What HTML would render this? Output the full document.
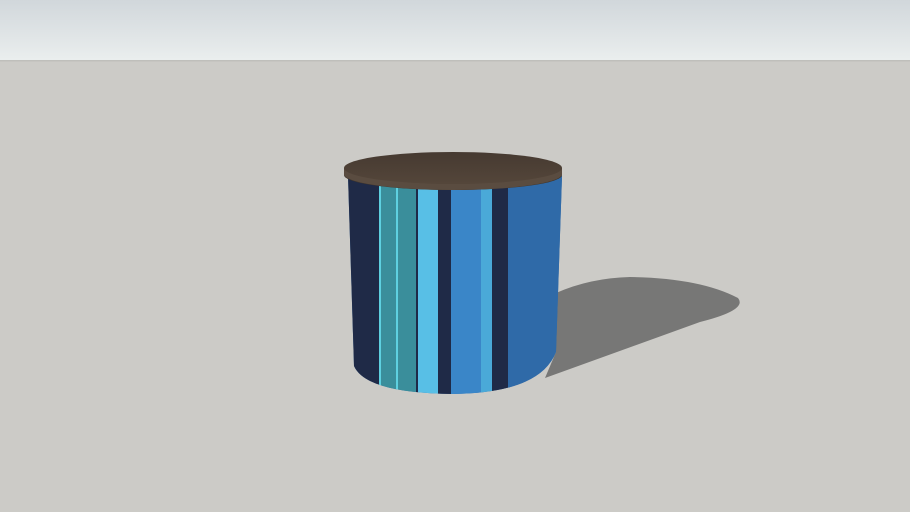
<!DOCTYPE html>
<html><head><style>html,body{margin:0;padding:0;width:910px;height:512px;overflow:hidden}</style></head>
<body>
<svg width="910" height="512" viewBox="0 0 910 512" xmlns="http://www.w3.org/2000/svg">
<defs>
<linearGradient id="sky" x1="0" y1="0" x2="0" y2="1"><stop offset="0" stop-color="#d1d7db"/><stop offset="1" stop-color="#eaeeee"/></linearGradient>
<clipPath id="body"><path d="M348 176 L562 176 L556 352 Q540 393 453 394 Q366 393 354 366 Z"/></clipPath>
<linearGradient id="wood" x1="0" y1="0" x2="0" y2="1"><stop offset="0" stop-color="#463a31"/><stop offset="1" stop-color="#54463a"/></linearGradient>
</defs>
<rect width="910" height="60" fill="url(#sky)"/>
<rect y="60" width="910" height="452" fill="#cccbc7"/>
<rect y="60" width="910" height="1.5" fill="#bfbfbb"/>
<path d="M556 293 Q590 278 630 277 Q700 278 738 298 Q748 310 700 322 L545 378 L556 352 Z" fill="#777776"/>
<g clip-path="url(#body)">
<rect x="340" y="170" width="230" height="230" fill="#2f6aa8"/>
<rect x="340" y="170" width="39" height="230" fill="#1f2a47"/>
<rect x="379" y="170" width="2" height="230" fill="#5ed0e0"/>
<rect x="381" y="170" width="15" height="230" fill="#3a8e9b"/>
<rect x="396" y="170" width="2" height="230" fill="#5ed0e0"/>
<rect x="398" y="170" width="18" height="230" fill="#3a8e9b"/>
<rect x="416" y="170" width="2" height="230" fill="#1f2a47"/>
<rect x="418" y="170" width="20" height="230" fill="#58bfe6"/>
<rect x="438" y="170" width="13" height="230" fill="#1f2a47"/>
<rect x="451" y="170" width="30" height="230" fill="#3a86c8"/>
<rect x="481" y="170" width="11" height="230" fill="#4aa9d8"/>
<rect x="492" y="170" width="16" height="230" fill="#1f2a47"/>
<rect x="508" y="170" width="60" height="230" fill="#2f6aa8"/>
</g>
<ellipse cx="453" cy="175" rx="109" ry="15" fill="#3e342c"/>
<path d="M344 168 L344 174 A109 16 0 0 0 562 174 L562 168 Z" fill="#5a4c40"/>
<ellipse cx="453" cy="168" rx="109" ry="16" fill="url(#wood)"/>
</svg>
</body></html>
